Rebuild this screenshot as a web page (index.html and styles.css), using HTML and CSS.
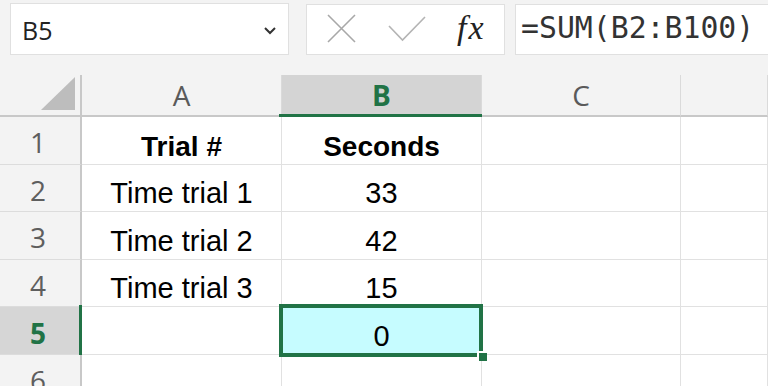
FILE: index.html
```html
<!DOCTYPE html>
<html>
<head>
<meta charset="utf-8">
<link rel="stylesheet" href="styles.css">
</head>
<body>
<div class="toolbar">
  <div class="namebox">
    <span class="ref">B5</span>
    <svg class="chev" width="14" height="10" viewBox="0 0 14 10"><path d="M2 3 L7 8 L12 3" fill="none" stroke="#333" stroke-width="2"/></svg>
  </div>
  <div class="actions">
    <svg class="ico-x" width="30" height="30" viewBox="0 0 30 30"><path d="M1 1 L28 28 M28 1 L1 28" stroke="#a8a8a8" stroke-width="1.6" fill="none"/></svg>
    <svg class="ico-check" width="38" height="28" viewBox="0 0 38 28"><path d="M1 10 L14.5 24 L37 1" stroke="#b4b4b4" stroke-width="1.6" fill="none"/></svg>
    <span class="fx">fx</span>
  </div>
  <div class="formula">=SUM(B2:B100)</div>
</div>
<div class="sheet">
  <div class="hd corner"><svg width="36" height="36" viewBox="0 0 36 36"><polygon points="1,34 35,34 35,1" fill="#bdbdbd"/></svg></div>
  <div class="hd col">A</div>
  <div class="hd col sel">B</div>
  <div class="hd col">C</div>
  <div class="hd col"></div>

  <div class="rh">1</div>
  <div class="c b">Trial #</div>
  <div class="c b">Seconds</div>
  <div class="c"></div>
  <div class="c"></div>

  <div class="rh">2</div>
  <div class="c">Time trial 1</div>
  <div class="c">33</div>
  <div class="c"></div>
  <div class="c"></div>

  <div class="rh">3</div>
  <div class="c">Time trial 2</div>
  <div class="c">42</div>
  <div class="c"></div>
  <div class="c"></div>

  <div class="rh">4</div>
  <div class="c">Time trial 3</div>
  <div class="c">15</div>
  <div class="c"></div>
  <div class="c"></div>

  <div class="rh rsel">5</div>
  <div class="c"></div>
  <div class="c active">0</div>
  <div class="c"></div>
  <div class="c"></div>

  <div class="rh">6</div>
  <div class="c"></div>
  <div class="c"></div>
  <div class="c"></div>
  <div class="c"></div>
</div>
</body>
</html>
```
FILE: styles.css
```css
html, body {
  margin: 0;
  padding: 0;
  width: 768px;
  height: 386px;
  overflow: hidden;
  background: #f3f3f3;
}
.toolbar {
  height: 75px;
  box-sizing: border-box;
  padding: 3px 0 0 10px;
  display: flex;
  align-items: flex-start;
}
.namebox {
  width: 279px;
  height: 52px;
  box-sizing: border-box;
  background: #fff;
  border: 1px solid #e0e0e0;
  display: flex;
  align-items: center;
  padding: 0 10px 0 11px;
}
.ref {
  font-family: "Open Sans", "Noto Sans", sans-serif;
  font-size: 25px;
  color: #222;
  flex: 1;
  position: relative;
  top: 1px;
}
.chev { margin-right: 1px; margin-top: 2px; }
.actions {
  margin-left: 17px;
  margin-top: 1px;
  width: 199px;
  height: 51px;
  box-sizing: border-box;
  background: #fff;
  border: 1px solid #e0e0e0;
  display: flex;
  align-items: flex-start;
  padding-left: 20px;
}
.ico-x { margin-top: 9px; }
.ico-check { margin-left: 31px; margin-top: 11px; }
.fx {
  margin-left: 31px;
  margin-top: 5px;
  font-family: "Liberation Serif", "DejaVu Serif", serif;
  font-style: italic;
  font-size: 34px;
  letter-spacing: 2px;
  color: #222;
  line-height: 36px;
}
.formula {
  margin-left: 10px;
  margin-top: 1px;
  flex: 1;
  height: 51px;
  box-sizing: border-box;
  background: #fff;
  border: 1px solid #e0e0e0;
  border-right: none;
  font-family: "DejaVu Sans Mono", "Liberation Mono", monospace;
  font-size: 29.8px;
  color: #333;
  line-height: 46px;
  padding-left: 5px;
  white-space: nowrap;
}
.sheet {
  display: grid;
  grid-template-columns: 82px 200px 200px 199px 1fr;
  grid-template-rows: 42px repeat(6, 47.6px);
}
.hd {
  box-sizing: border-box;
  background: #f3f3f3;
  border-bottom: 2px solid #c8c8c8;
  border-right: 1px solid #dadada;
  display: flex;
  align-items: center;
  justify-content: center;
  font-family: "Open Sans", "Noto Sans", sans-serif;
  font-size: 28px;
  color: #5a5a5a;
  position: relative;
}
.hd.corner {
  border-right: 2px solid #c8c8c8;
  justify-content: flex-end;
  align-items: flex-end;
  padding: 0 4px 3px 0;
}
.hd.corner svg { display: block; }
.hd.sel {
  background: #d4d4d4;
  color: #217346;
  font-weight: 700;
  border-bottom-color: transparent;
}
.hd.sel::after {
  content: "";
  position: absolute;
  left: -3px;
  right: -3px;
  bottom: -2px;
  height: 3px;
  background: #217346;
}
.rh {
  box-sizing: border-box;
  background: #f3f3f3;
  border-right: 2px solid #c8c8c8;
  border-bottom: 1px solid #dcdcdc;
  display: flex;
  align-items: center;
  justify-content: center;
  font-family: "Open Sans", "Noto Sans", sans-serif;
  font-size: 28px;
  color: #5e5e5e;
  padding-top: 4px;
  padding-right: 4px;
  position: relative;
}
.rh.rsel {
  background: #d6d6d6;
  color: #217346;
  font-weight: 700;
}
.rh.rsel::after {
  content: "";
  position: absolute;
  right: -2px;
  top: -2px;
  bottom: -3px;
  width: 3px;
  background: #217346;
}
.c {
  box-sizing: border-box;
  background: #fff;
  border-right: 1px solid #e1e1e1;
  border-bottom: 1px solid #e1e1e1;
  display: flex;
  align-items: flex-end;
  justify-content: center;
  font-family: "Liberation Sans", Arial, sans-serif;
  font-size: 29px;
  line-height: 29px;
  color: #000;
  padding-bottom: 3px;
  white-space: nowrap;
  position: relative;
}
.c.b {
  font-weight: 700;
  font-size: 28px;
}
.c.active {
  background: #c6fcff;
  z-index: 2;
}
.c.active::before {
  content: "";
  position: absolute;
  left: -3px;
  top: -3px;
  right: -2px;
  bottom: -3px;
  border: 4px solid #217346;
  box-sizing: border-box;
}
.c.active::after {
  content: "";
  position: absolute;
  right: -6px;
  bottom: -7px;
  width: 8px;
  height: 8px;
  background: #217346;
  border-left: 2px solid #fff;
  border-top: 2px solid #fff;
}
```
